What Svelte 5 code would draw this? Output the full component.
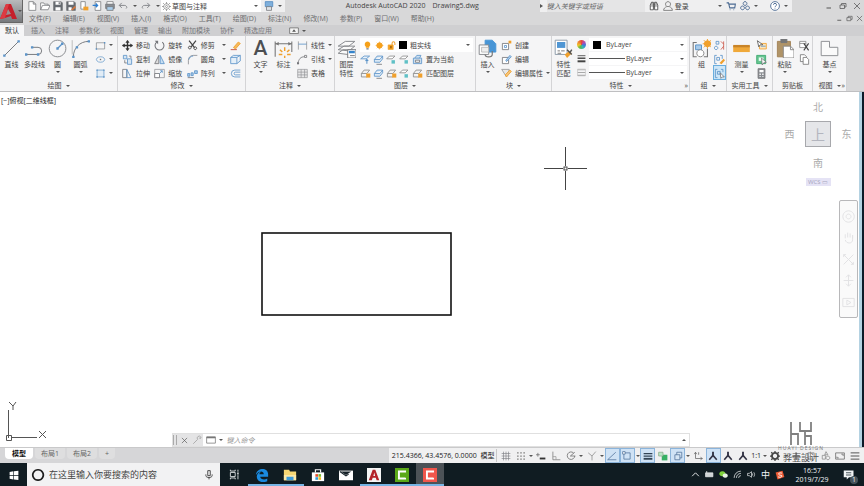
<!-- App.svelte
     CAD workspace: title bar, ribbon, model-space canvas, status bar and the
     desktop taskbar underneath. -->
<script lang="ts">
  type Shape = [d: string, stroke: string, fill?: string, width?: number]

  const G = '#74767a'
  const B = '#5b93c8'
  const Y = '#f0a02c'
  const W = '#f2f4f5'

  /** Icon shapes on a 16x16 grid. */
  const icons: Record<string, Shape[]> = {
    // title bar
    new: [['M3 1h7l4 4v10H3zM10 1v4h4', G, '#fff']],
    open: [['M1 14V3h5l1 2h6v2M1 14l3-7h12l-3 7z', G, '#fff']],
    save: [['M1 1h12l2 2v12H1z', G, '#666a70'], ['M4 1h8v5H4zM4 10h8v5H4z', 'none', '#fff'], ['M9 2h2v3H9z', 'none', G]],
    saveAs: [['M1 1h12l2 2v12H1z', G, '#666a70'], ['M4 1h8v5H4zM4 10h5v5H4z', 'none', '#fff'], ['M8 14l6-6 2 2-6 5z', 'none', '#d9783c']],
    web: [['M3 1h7v12H3z', G, '#fff'], ['M7 9h8v6H7z', 'none', Y]],
    mobile: [['M5 1h9v14H5z', G, '#fff'], ['M1 7h8M6 4l3 3-3 3', '#2f7fd0', 'none', 2]],
    print: [['M3 1h10v5H3z', G, '#fff'], ['M1 5h14v7H1z', G, '#8a8d92'], ['M3 9h10v6H3z', G, '#a9cdea']],
    undo: [['M6 3L2 7l4 4M2 7h8a4 3 0 0 1 3 5', '#85878b', 'none', 1.6]],
    redo: [['M10 3l4 4-4 4M14 7H6a4 3 0 0 0-3 5', '#85878b', 'none', 1.6]],
    gear: [['M8 3a5 5 0 1 0 .1 0zM8 0v3M8 13v3M0 8h3M13 8h3M2 2l2 2M12 12l2 2M14 2l-2 2M4 12l-2 2', '#777'], ['M8 6a2 2 0 1 0 .1 0z', '#777']],
    layers2: [['M2 1h12v8H2z', '#4a84bd', '#7fb0dc'], ['M4 9h8v6H4z', G, '#dfe3e8']],
    find: [['M2 14V7l2-5h3v12zM14 14V7l-2-5H9v12zM7 6h2M7 9h2', '#555', '#bbb', 1.5], ['M3 9h3v4H3zM10 9h3v4h-3z', 'none', '#fff']],
    user: [['M8 1a4 4 0 1 0 .1 0zM1 15c0-3 2-5 5-6M15 15c0-3-2-5-5-6M1 15h14', '#666']],
    cart: [['M1 3h3l2 8h8l1-6H5M6 14h1M12 14h1', '#4b6a92', 'none', 1.7]],
    cloud: [['M8 1a3 3 0 1 0 .1 0zM4 8a3 3 0 1 0 .1 0zM12 8a3 3 0 1 0 .1 0z', '#4b6a92', 'none', 1.5]],
    help: [['M8 1a7 7 0 1 0 .1 0z', '#4b6a92', '#fff', 1.4], ['M5.500 6c0-3 5-3 5 0 0 2-2.500 2-2.500 4M8 12v1', '#4b6a92', 'none', 1.5]],
    min: [['M3 12h9', '#555', 'none', 2]],
    restore: [['M2 6h9v7H2zM5 6V3h9v7h-3', '#555', 'none', 1.5]],
    close: [['M2 2l12 12M14 2L2 14', '#555', 'none', 1.5]],
    tray: [['M1 3h14v9H1z', '#666', '#f4f4f4'], ['M8 5l-3 4h6z', 'none', '#555']],
    // draw
    line: [['M2 14L14 2', G, 'none', .8], ['M1 13h2v2H1zM13 1h2v2h-2z', 'none', B]],
    polyline: [['M1 13h10a3 3 0 0 0 0-6H6', G, 'none', .8], ['M0 12h2v2H0zM10 12h2v2h-2zM5 6h2v2H5z', 'none', B]],
    circle: [['M8 1a7 7 0 1 0 .1 0z', '#85878b', 'none', .8], ['M8 8l4-4', B, 'none', 1], ['M7 7h2v2H7zM11 3h2v2h-2z', 'none', B]],
    arc: [['M2 15C2 8 7 2 15 2', G, 'none', .8], ['M1 14h2v2H1zM4 6h2v2H4zM14 1h2v2h-2z', 'none', B], ['M1 1v12', '#bbb', 'none', .8]],
    rect: [['M2 4h12v9H2z', G, 'none', .9], ['M1 12h2v2H1zM13 3h2v2h-2z', 'none', B]],
    ellipse: [['M8 4a6 4 0 1 0 .1 0z', B, 'none', 1], ['M7 7h2v2H7z', 'none', G]],
    hatch: [['M3 3h10v10H3z', B, '#e1ecf6', 1], ['M2 2h2v2H2zM12 2h2v2h-2zM2 12h2v2H2zM12 12h2v2h-2z', 'none', B]],
    // modify
    move: [['M8 1v14M1 8h14', '#333', 'none', 2], ['M8 0l3 4H5zM8 16l3-4H5zM0 8l4-3v6zM16 8l-4-3v6z', 'none', '#333']],
    copy: [['M2 2h5v5H2zM8 7h6v8H8z', B, '#d7e6f3'], ['M4 9v4h3M10 3h3v3', G]],
    stretch: [['M1 2h6v12H1z', G], ['M7 2l6 12H7z', B]],
    rotate: [['M4 3a6.500 6.500 0 1 0 8 0', G, 'none', 1.5], ['M1 1h5v5z', 'none', G]],
    mirror: [['M7 2v12H1z', G, '#ddd'], ['M9 2v12h6z', B, '#c9dff2']],
    scale: [['M1 2h14v12H1z', '#9a9ca0'], ['M1 8h7v6H1z', G, '#fff'], ['M8 8l4-4M9 4h3v3', B]],
    trim: [['M3 1l8 10M13 1L6 10', '#444', 'none', 1.8], ['M4 9a2 2 0 1 0 .1 0zM12 10a2 2 0 1 0 .1 0z', '#444', 'none', 1.4]],
    fillet: [['M2 15V9c0-4 3-7 7-7h6', '#8a8c90'], ['M3 8c0-3 3-5 6-5', B]],
    array: [['M1 8h3v4H1zM6 7h3v4H6zM11 4h4v4h-4z', B, '#a9cbea'], ['M1 14h9', G]],
    erase: [['M5 11l7-8 3 2-7 8z', Y, '#f5b95c'], ['M1 14h9', '#c9624e', 'none', 1.5]],
    box: [['M1 5h9v9H1zM1 5l4-3h10l-5 3M15 2v8l-5 4', B, '#e4eff8']],
    offset: [['M15 3H7a5 5 0 0 0 0 10h8M15 6H8a2 2 0 0 0 0 4h7', B]],
    // annotation
    dim: [['M1 2v13M15 2v9M1 4h14', '#777', 'none', .9], ['M1 4l3-1.500v3zM15 4l-3-1.500v3z', 'none', '#777'], ['M9 7v3M5 9l2 2M13 9l-2 2M4 13h3M14 13h-3M9 16v-2', Y, 'none', 1.2]],
    linear: [['M2 2v12M14 2v12', '#999'], ['M2 6h12', B]],
    leader: [['M1 14C3 7 5 4 11 4', G], ['M11 2h3v3h-3z', G, '#fff'], ['M0 12h3v3H0z', 'none', G]],
    table: [['M1 2h14v12H1zM1 6h14M1 10h14M6 2v12M11 2v12', '#8b8d91', '#e7e7e8', .9]],
    // layers
    layerProps: [['M1 6l6-4h8l-5 4zM1 9l5-3h9l-5 4zM1 12l4-3h8l-4 4z', '#85878b', '#fafafa', .8], ['M9 9h7v7H9z', G, '#fff', .8], ['M10 10h5v2h-5z', 'none', '#3584cb'], ['M11 14h4', G, 'none', .8]],
    bulb: [['M8 1a5 5 0 0 1 3 9v2H5v-2a5 5 0 0 1 3-9z', 'none', '#f6a11a'], ['M6 14h4', '#666', 'none', 2]],
    sun: [['M8 3a5 5 0 1 0 .1 0z', Y, '#f6a11a'], ['M8 1v14M1 8h14M3 3l10 10M13 3L3 13', '#f6a11a', 'none', 1]],
    unlock: [['M2 7h9v8H2z', Y, '#f6a11a'], ['M9 7V4a2 2 0 0 1 5 0v3', Y, 'none', 1.8], ['M6 9h2v4H6z', 'none', '#7a4d0d']],
    layA: [['M1 7l5-4h8l-5 4z', B, '#e7f1fa'], ['M10 8v6M8 10l2-2 2 2', B, 'none', 1.5]],
    layB: [['M2 8l4-5h8l-4 5zM2 8v4h8l4-5V3', B, '#dbe9f5'], ['M5 15h8', G]],
    layC: [['M1 7l4-4h8l-4 4z', '#888', '#fff'], ['M8 9h5v5H8z', 'none', '#5fc0c6']],
    layD: [['M2 8l4-5h8l-4 5zM2 8v5h8', '#888', '#f1f1f1'], ['M9 8h6v6H9z', 'none', Y]],
    layE: [['M2 6h12v8H2zM4 6l3-4h6l-2 4', B, '#cfe1f1'], ['M5 9h6v3H5z', G, '#fff']],
    // block
    insert: [['M6 1h6l3 3v7H6z', '#4795d6', '#4795d6', .8], ['M1 5h8v8H1z', '#85878b', '#fff', .8], ['M3 7h6v4H3z', '#aaa', '#eee', .6], ['M12 10v3M6 13a3 2 0 1 0 6 0', '#777', 'none', 1]],
    create: [['M2 5h9v9H2z', G, '#fff'], ['M5 8h3v3H5z', B], ['M11 1h4v4h-4z', 'none', Y]],
    edit: [['M2 5h9v9H2z', G, '#fff'], ['M7 9l6-7 2 2-7 7z', B, '#a9cbea']],
    attr: [['M1 2h11l-4 11z', '#999', '#e8e8e8'], ['M6 10l7-7 2 2-7 8z', Y, '#f5c479']],
    // properties
    match: [['M1 1h10v12H1z', '#8c9aa8', '#fff', .8], ['M2.500 2.500h7v5h-7z', 'none', '#4f96d4'], ['M3 10h2M6 10h3M3 12h3', '#777', 'none', .8], ['M9 13l4-3 2 2-4 4z', 'none', Y], ['M11 9l4 4M15 9l-2 3', '#555', 'none', 1.2]],
    lweight: [['M1 3h14', '#444', 'none', 1.5], ['M1 7.500h14', '#444', 'none', 2.500], ['M1 13h14', '#444', 'none', 3.500]],
    ltype: [['M1 3h14M1 8h14M1 13h14', '#aaa', '#ddd', 2], ['M1 2h14v12H1z', '#c4c4c4']],
    // groups, utilities, clipboard, view
    group: [['M4 3H1v12h3M10 15h3V8', '#777', 'none', .9], ['M3 5h5v4H3z', B, '#a9cbea', .8], ['M7 9a3 3 0 1 0 .1 0z', '#888', '#fff', .8], ['M13 1a3 3 0 1 0 .1 0z', 'none', Y], ['M13 0v8M9 4h7M10 1l6 6M16 1l-6 6', Y, 'none', .8]],
    ungroup: [['M3 2h4v4H3zM3 9a2.500 2.500 0 1 0 .1 0z', B], ['M10 2l4 4M14 9l-4 5M14 2v12', '#cc5a4a']],
    groupEdit: [['M4 2H1v12h3M9 2h3v5M4 5h4v4H4z', B], ['M8 13l6-6 2 2-5 6z', 'none', Y]],
    groupSel: [['M5 2H2v12h3M10 2h3v4M5 5h4v4H5z', B], ['M9 7l6 6h-3l-2 2z', G, '#fff']],
    measure: [['M1 6h14v5H1z', 'none', '#f0a93a'], ['M1 5h14v2H1z', 'none', '#c98428']],
    quick: [['M5 5h10v8H5z', Y, '#fbe5bd'], ['M2 1l2 9 2-3 4 0z', '#555', '#fff'], ['M7 9h7', B]],
    calc1: [['M1 2h13v12H1z', '#37a56a', '#66c490'], ['M4 5h7v5H4z', 'none', '#e9fff2'], ['M8 6l7 6-4 1-2 3z', G, '#fff']],
    calc: [['M3 1h10v14H3z', G, '#8a8d92'], ['M5 3h6v3H5zM5 8h2v2H5zM9 8h2v2H9zM5 12h2v1H5zM9 12h2v1H9z', 'none', '#fff']],
    paste: [['M2 2h11v13H2z', '#a38456', '#b09468', .8], ['M5 0h5v3H5z', G, '#777', .8], ['M7 6h6l3 3v7H7z', '#888', '#fff', .8], ['M13 6v3h3', '#888', 'none', .8]],
    cut: [['M1 2h9v9H1zM1 5h9', '#888', '#fff'], ['M7 5l7 10M14 5L7 15', '#444', 'none', 1.6]],
    copyClip: [['M2 1h6l3 3v7H2z', '#777', '#fff'], ['M6 5h5l3 3v7H6z', '#777', '#fff']],
    base: [['M1 2h7v5h7v7H1z', '#8b8d91', '#fafafa', .8]],
    // status bar
    grid: [['M4 1v14M8 1v14M12 1v14M1 4h14M1 8h14M1 12h14', '#7d7f83', 'none', 1]],
    dots: [['M2 3h2M7 3h2M12 3h2M2 8h2M7 8h2M12 8h2M2 13h2M7 13h2M12 13h2', '#666', 'none', 2]],
    infer: [['M3 3v6M0 6h6', '#666'], ['M6 12h9', '#333', 'none', 3]],
    ortho: [['M3 1v13h12', '#777'], ['M3 9h5v5', '#999']],
    polar: [['M12 3a6 6 0 1 0 2 5M7 8l7-6M7 8h8', '#666']],
    iso: [['M2 3l6 5v7M14 1L8 8', '#888', 'none', 1.2]],
    track: [['M1 14L14 2M1 14h14', '#4d6f98']],
    snap: [['M3 3h10v10H3z', '#4d6f98'], ['M1 1h4v4H1z', '#4d6f98', '#fff']],
    lwt: [['M1 4h14M1 8h14', '#345', 'none', 2], ['M1 12.500h14', '#345', 'none', 3]],
    transp: [['M6 6h9v9H6z', 'none', '#37b063'], ['M1 2h7v6H1z', '#8a8', '#b9e5c6']],
    cycle: [['M3 6h8v8H3zM6 6V2h8v9h-3', '#4d6f98', '#d5e5f4']],
    ucs: [['M4 2v10h11M4 2L2 5M4 2l2 3M15 12l-3-2M15 12l-3 2M9 2v4', '#666']],
    person: [['M8 1v8', '#334', 'none', 3], ['M8 7L2 14M8 7l6 7', '#334', 'none', 2.5]],
    gearDark: [['M8 3a5 5 0 1 0 .1 0z', '#444', 'none', 3], ['M8 0v3M8 13v3M0 8h3M13 8h3M2 2l2 2M12 12l2 2M14 2l-2 2M4 12l-2 2', '#444', 'none', 2]],
    plus: [['M8 2v12M2 8h12', '#555', 'none', 1.500]],
    isolate: [['M3 3h10v10H3zM7 1v14', '#777']],
    shapes: [['M2 7h5v6H2zM11 8a3 3 0 1 0 .1 0zM8 1l3 5H6z', '#888']],
    full: [['M1 3h14v10H1zM10 5h3v3M3 9v2h3', '#666']],
    menu: [['M1 3h14M1 8h14M1 13h14', '#555', 'none', 1.600]],
    wrench: [['M2 14l7-7M9 7a3 3 0 0 1 5-4l-2 2 1 1 2-2', '#aaa', 'none', 1.500]],
    prompt: [['M1 3h14v10H1z', '#777', '#fff'], ['M1 4h14', '#777', 'none', 2.500]],
    // navigation bar
    wheel: [['M8 1a7 7 0 1 0 .1 0zM8 5a3 3 0 1 0 .1 0z', '#e2e2e4']],
    pan: [['M4 9V4M7 8V2M10 8V3M13 9V5v6c0 5-8 5-9 0', '#e2e2e4']],
    zoom: [['M2 2l12 12M14 2L2 14M2 5V2h3M11 14h3v-3', '#e2e2e4']],
    orbit: [['M8 1v14M2 8h12M5 4l3-3 3 3M5 12l3 3 3-3', '#e2e2e4']],
    motion: [['M1 3h14v10H1zM6 5v6l5-3z', '#e2e2e4']],
    // taskbar
    windows: [['M1 3l6-1v6H1zM8 2l7-1v7H8zM1 9h6v6l-6-1zM8 9h7v7l-7-1z', 'none', '#fff']],
    cortana: [['M8 2a6 6 0 1 0 .1 0z', '#1c1c1c', 'none', 2]],
    mic: [['M6 1h4v8H6zM3 7v2c0 4 10 4 10 0V7M8 12v3', '#444', 'none', 1.500]],
    taskview: [['M2 5h7v6H2zM2 1v2h7V1M2 15v-2h7v2M13 1v3M13 9v6', W, 'none', 1.200], ['M12 5h2v3h-2z', 'none', W]],
    edge: [['M1 8C2-1 15-1 15 7v3H6c0 3 5 4 8 2v3C8 18 2 15 2 10c0-3 2-5 5-6-1 1-2 2-2 3h5c0-4-6-4-9 1z', 'none', '#1a8ae0']],
    folder: [['M1 2h6l1 2h7v10H1z', 'none', '#f7d774'], ['M1 8h14v6H1z', 'none', '#fbe9a9'], ['M4 10h8v4H4z', 'none', '#3e9bd8']],
    store: [['M1 5h14v10H1z', 'none', '#fff'], ['M5 5V2h6v3', '#fff', 'none', 1.300], ['M5 7h3v3H5z', 'none', '#e65030'], ['M8.500 7h3v3h-3z', 'none', '#75b82c'], ['M5 10.500h3v3H5z', 'none', '#2d9de0'], ['M8.500 10.500h3v3h-3z', 'none', '#f5b921']],
    mail: [['M0 3h16v11H0z', 'none', '#fff'], ['M2 4l12 0-6 4z', 'none', '#142027'], ['M1 4l7 5 3-2', '#142027', 'none', 1.2]],
    acad: [['M0 0h16v16H0z', 'none', '#f4f4f4'], ['M2 14L6.500 2h3L14 14h-3l-1-3H6.500l-1 3zM8.300 5l-1 4h2z', 'none', '#b32229']],
    camGreen: [['M0 0h16v16H0z', 'none', '#5aa818'], ['M11.500 5V4h-7v8h7v-1', '#fff', 'none', 2.200]],
    camRed: [['M0 0h16v16H0z', 'none', '#f0564c'], ['M11.500 5V4h-7v8h7v-1', '#fff', 'none', 2.200]],
    up: [['M2 11l6-6 6 6', W, 'none', 1.600]],
    battery: [['M1 5h13v7H1z', W, '#cfd3d5'], ['M3 2v3', W, 'none', 1.500]],
    wechat: [['M6 2a5.500 4.500 0 1 0 .1 0z', 'none', '#7fd03c'], ['M11 6a4.500 4 0 1 0 .1 0z', 'none', '#e9f3e4']],
    wifi: [['M2 14A12 12 0 0 1 14 2M6 14a8 8 0 0 1 8-8M10 14a4 4 0 0 1 4-4', W, 'none', 1.300]],
    volume: [['M1 6h3l4-3v10l-4-3H1zM10 6v4M12 4c2 2 2 6 0 8', W, 'none', 1.200]],
    sogou: [['M1 4l11-3 3 10-11 4z', 'none', '#ee5b35'], ['M11 5c-3-1-6 0-5 2s6 1 5 3-4 2-6 1', '#fff', 'none', 1.500]],
    notify: [['M1 2h13v9H8l-3 3v-3H1z', 'none', W], ['M4 5h7M4 8h7', '#35434b']],
  }

  const quick = ['new', 'open', 'save', 'saveAs', 'web', 'mobile', 'print']
  const menus = ['文件(F)', '编辑(E)', '视图(V)', '插入(I)', '格式(O)', '工具(T)', '绘图(D)', '标注(N)', '修改(M)', '参数(P)', '窗口(W)', '帮助(H)']
  const ribbonTabs = ['默认', '插入', '注释', '参数化', '视图', '管理', '输出', '附加模块', '协作', '精选应用']
  const layouts = ['模型', '布局1', '布局2']

  /** Status toggles; "v" is a drop-down arrow, a trailing "*" marks a toggle that is on. */
  const statusItems = ['grid', 'dots', 'v', 'infer', 'ortho', 'polar', 'v', 'iso', 'v', 'track*', 'snap*', 'v', 'lwt*', 'transp', 'cycle*', 'v', 'ucs', 'person*', 'person', 'person']
  const statusTail = ['gearDark', 'v', 'plus', 'isolate', 'shapes', 'full', 'menu']

  const apps = [
    { icon: 'taskview', name: '任务视图', open: false },
    { icon: 'edge', name: 'Edge', open: true },
    { icon: 'folder', name: '文件资源管理器', open: true },
    { icon: 'store', name: '应用商店', open: false },
    { icon: 'mail', name: '邮件', open: false },
    { icon: 'acad', name: 'AutoCAD', open: true },
    { icon: 'camGreen', name: 'Camtasia', open: true },
    { icon: 'camRed', name: '录制', open: true },
  ]

  let activeTab = $state('默认')
  let activeLayout = $state('模型')
  let keyword = $state('')
  let command = $state('')
  let search = $state('')
</script>

{#snippet icon(name: string, size = 11)}
  <svg class="icon" width={size} height={size} viewBox="0 0 16 16" aria-hidden="true">
    {#each icons[name] as [d, stroke, fill, width]}
      <path {d} {stroke} fill={fill ?? 'none'} stroke-width={width ?? 1.2} />
    {/each}
  </svg>
{/snippet}

{#snippet big(name: string, label: string, caret = false)}
  <button class="big">
    {#if name === 'text'}
      <span class="glyph" aria-hidden="true">A</span>
    {:else}
      {@render icon(name, 19)}
    {/if}
    <span class="big-label">{label}</span>
    {#if caret}<span class="caret"></span>{/if}
  </button>
{/snippet}

{#snippet small(name: string, label = '', caret = false)}
  <button class="small" aria-label={label || name}>
    {@render icon(name)}
    {#if label}<span>{label}</span>{/if}
    {#if caret}<span class="caret push"></span>{/if}
  </button>
{/snippet}

{#snippet title(text: string, caret = true, launcher = false)}
  <div class="panel-title">
    <span>{text}</span>
    {#if caret}<span class="caret"></span>{/if}
    {#if launcher}<span class="launcher">»</span>{/if}
  </div>
{/snippet}

<div class="app">
  <header class="top">
    <button class="app-menu" aria-label="应用程序菜单">
      <svg width="18" height="19" viewBox="0 0 18 19" aria-hidden="true">
        <path d="M0 17L6 2h5l6 15h-5l-1-3-6 2z" fill="#c5202b" />
        <path d="M6 2h3L5 16l-5 1z" fill="#dd3a42" />
        <path d="M8 7l3 5-5 1z" fill="#9c8f91" />
      </svg>
      <span class="caret"></span>
    </button>
    <div class="top-rows">
      <div class="titlebar">
        <div class="quick">
          {#each quick as name}
            <button aria-label={name}>{@render icon(name, 10)}</button>
          {/each}
          <button aria-label="undo">{@render icon('undo', 10)}</button>
          <span class="caret"></span>
          <button aria-label="redo">{@render icon('redo', 10)}</button>
          <span class="caret"></span>
        </div>
        <label class="combo workspace">
          {@render icon('gear', 9)}
          <select aria-label="工作空间"><option>草图与注释</option></select>
          <span class="caret"></span>
        </label>
        <div class="quick-end">
          {@render icon('layers2', 10)}
          <span class="caret"></span>
        </div>
        <h1 class="doc-title"><span>Autodesk AutoCAD 2020</span><span>Drawing5.dwg</span></h1>
        <div class="info">
          <span class="caret right"></span>
          <input bind:value={keyword} placeholder="键入关键字或短语" aria-label="搜索帮助" />
          <button aria-label="搜索">{@render icon('find', 10)}</button>
          <button class="login">{@render icon('user', 10)}<span>登录</span></button>
          <span class="caret push"></span>
          <button aria-label="商店">{@render icon('cart', 10)}</button>
          <button aria-label="应用">{@render icon('cloud', 10)}</button>
          <span class="caret"></span>
          <button class="help" aria-label="帮助">{@render icon('help', 10)}</button>
          <span class="caret"></span>
        </div>
        <div class="win">
          <button aria-label="最小化">{@render icon('min', 8)}</button>
          <button aria-label="还原">{@render icon('restore', 8)}</button>
          <button aria-label="关闭">{@render icon('close', 8)}</button>
        </div>
      </div>
      <nav class="menubar">
        {#each menus as m}
          <button>{m}</button>
        {/each}
        <div class="win doc-win">
          <button aria-label="最小化文档">{@render icon('min', 7)}</button>
          <button aria-label="还原文档">{@render icon('restore', 7)}</button>
          <button aria-label="关闭文档">{@render icon('close', 7)}</button>
        </div>
      </nav>
    </div>
  </header>

  <div class="tabs" role="tablist">
    {#each ribbonTabs as t}
      <button role="tab" aria-selected={activeTab === t} class:active={activeTab === t} onclick={() => (activeTab = t)}>{t}</button>
    {/each}
    <span class="tray">{@render icon('tray', 10)}<span class="caret"></span></span>
  </div>

  <div class="ribbon">
    <section class="panel">
      <div class="body">
        {@render big('line', '直线')}
        {@render big('polyline', '多段线')}
        {@render big('circle', '圆', true)}
        {@render big('arc', '圆弧', true)}
        <div class="col">
          {@render small('rect', '', true)}
          {@render small('ellipse', '', true)}
          {@render small('hatch', '', true)}
        </div>
      </div>
      {@render title('绘图')}
    </section>

    <section class="panel">
      <div class="body spread">
        <div class="col">
          {@render small('move', '移动')}
          {@render small('copy', '复制')}
          {@render small('stretch', '拉伸')}
        </div>
        <div class="col">
          {@render small('rotate', '旋转')}
          {@render small('mirror', '镜像')}
          {@render small('scale', '缩放')}
        </div>
        <div class="col">
          {@render small('trim', '修剪', true)}
          {@render small('fillet', '圆角', true)}
          {@render small('array', '阵列', true)}
        </div>
        <div class="col">
          {@render small('erase')}
          {@render small('box')}
          {@render small('offset')}
        </div>
      </div>
      {@render title('修改')}
    </section>

    <section class="panel">
      <div class="body inset">
        {@render big('text', '文字', true)}
        {@render big('dim', '标注')}
        <div class="col wide">
          {@render small('linear', '线性', true)}
          {@render small('leader', '引线', true)}
          {@render small('table', '表格')}
        </div>
      </div>
      {@render title('注释')}
    </section>

    <section class="panel">
      <div class="body">
        {@render big('layerProps', '图层特性')}
        <div class="col fill">
          <label class="combo">
            {@render icon('bulb', 9)}
            {@render icon('sun', 9)}
            {@render icon('unlock', 9)}
            <span class="swatch tight"></span>
            <select aria-label="图层"><option>粗实线</option></select>
            <span class="caret"></span>
          </label>
          <div class="strip">
            {#each ['layA', 'layB', 'layC', 'layC'] as name}
              {@render icon(name)}
            {/each}
            {@render small('layE', '置为当前')}
          </div>
          <div class="strip">
            {#each ['layD', 'layB', 'layD', 'layC'] as name}
              {@render icon(name)}
            {/each}
            {@render small('layD', '匹配图层')}
          </div>
        </div>
      </div>
      {@render title('图层')}
    </section>

    <section class="panel">
      <div class="body">
        {@render big('insert', '插入', true)}
        <div class="col wide">
          {@render small('create', '创建')}
          {@render small('edit', '编辑')}
          {@render small('attr', '编辑属性', true)}
        </div>
      </div>
      {@render title('块')}
    </section>

    <section class="panel">
      <div class="body">
        {@render big('match', '特性匹配')}
        <div class="col fill">
          <div class="prop">
            <span class="wheel"></span>
            <label class="combo">
              <span class="swatch"></span>
              <select aria-label="颜色"><option>ByLayer</option></select>
              <span class="caret"></span>
            </label>
          </div>
          <div class="prop">
            {@render icon('lweight', 9)}
            <label class="combo">
              <span class="rule"></span>
              <select aria-label="线宽"><option>ByLayer</option></select>
              <span class="caret"></span>
            </label>
          </div>
          <div class="prop">
            {@render icon('ltype', 9)}
            <label class="combo">
              <span class="rule"></span>
              <select aria-label="线型"><option>ByLayer</option></select>
              <span class="caret"></span>
            </label>
          </div>
        </div>
      </div>
      {@render title('特性', true, true)}
    </section>

    <section class="panel">
      <div class="body">
        {@render big('group', '组')}
        <div class="col snug">
          {@render small('ungroup')}
          {@render small('groupEdit')}
          <div class="pressed">{@render small('groupSel')}</div>
        </div>
      </div>
      {@render title('组')}
    </section>

    <section class="panel">
      <div class="body inset">
        {@render big('measure', '测量', true)}
        <div class="col">
          {@render small('quick')}
          {@render small('calc1')}
          {@render small('calc')}
        </div>
      </div>
      {@render title('实用工具')}
    </section>

    <section class="panel">
      <div class="body">
        {@render big('paste', '粘贴', true)}
        <div class="col">
          {@render small('cut')}
          {@render small('copyClip')}
        </div>
      </div>
      {@render title('剪贴板', false)}
    </section>

    <section class="panel">
      <div class="body centered">
        {@render big('base', '基点', true)}
      </div>
      {@render title('视图', true, true)}
    </section>
  </div>

  <main class="canvas">
    <div class="view-label">[−]俯视[二维线框]</div>

    <!-- model space geometry and cursor -->
    <svg class="drawing" width="600" height="240" aria-hidden="true">
      <rect x="262" y="141" width="189" height="82" fill="none" stroke="#111" stroke-width="1.6" />
      <path d="M544 76.500h19M568 76.500h19M565.500 55v19M565.500 79v19" stroke="#444" />
      <rect x="564" y="75" width="3" height="3" fill="none" stroke="#444" />
    </svg>

    <svg class="ucs" width="50" height="44" aria-hidden="true">
      <path d="M8.500 38V10M11 37.500h26M6.500 35.500h5v5h-5z" fill="none" stroke="#555" />
      <path d="M9 2l4 4 3-4M13 6v4M39 31l7 7M46 31l-7 7" fill="none" stroke="#555" />
    </svg>

    <div class="viewcube">
      <span class="north">北</span>
      <span class="west">西</span>
      <button class="face">上</button>
      <span class="east">东</span>
      <span class="south">南</span>
      <button class="wcs">WCS ▭</button>
    </div>

    <div class="navbar">
      {#each ['wheel', 'pan', 'zoom', 'orbit', 'motion'] as name}
        <button aria-label={name}>{@render icon(name, 13)}</button>
      {/each}
    </div>

    <div class="command">
      <div class="command-grip">
        <span class="grip"></span>
        {@render icon('close', 7)}
        {@render icon('wrench', 10)}
      </div>
      {@render icon('prompt', 10)}
      <span class="caret"></span>
      <input bind:value={command} placeholder="键入命令" aria-label="命令行" />
      <span class="caret up"></span>
    </div>
  </main>

  <div class="status">
    <div class="layouts">
      {#each layouts as l}
        <button class:active={activeLayout === l} onclick={() => (activeLayout = l)}>{l}</button>
      {/each}
      <button aria-label="新建布局">+</button>
    </div>
    <div class="status-tools">
      <span class="coords">215.4366, 43.4576, 0.0000</span>
      <button class="model">模型</button>
      {#each statusItems as s}
        {#if s === 'v'}
          <span class="caret"></span>
        {:else}
          <button class="toggle" class:on={s.endsWith('*')} aria-label={s.replace('*', '')}>{@render icon(s.replace('*', ''), 10)}</button>
        {/if}
      {/each}
      <button class="scale">1:1</button>
      <span class="caret"></span>
      {#each statusTail as s}
        {#if s === 'v'}
          <span class="caret"></span>
        {:else}
          <button class="toggle" aria-label={s}>{@render icon(s, 10)}</button>
        {/if}
      {/each}
    </div>
  </div>

  <footer class="taskbar">
    <button class="start" aria-label="开始">{@render icon('windows', 10)}</button>
    <label class="search">
      {@render icon('cortana', 14)}
      <input bind:value={search} placeholder="在这里输入你要搜索的内容" aria-label="搜索" />
      {@render icon('mic', 10)}
    </label>
    <div class="apps">
      {#each apps as a}
        <button class:open={a.open} class:current={a.icon === 'camRed'} aria-label={a.name}>{@render icon(a.icon, a.icon === 'taskview' ? 11 : 14)}</button>
      {/each}
    </div>
    <div class="sys">
      {#each ['up', 'battery', 'wechat', 'wifi', 'volume'] as s}
        {@render icon(s, 9)}
      {/each}
      <span class="ime">中</span>
      {@render icon('sogou', 10)}
      <div class="clock"><span>16:57</span><span>2019/7/29</span></div>
      <div class="notify">{@render icon('notify', 12)}<span class="count">1</span></div>
    </div>
  </footer>

  <div class="brand">
    <svg width="24" height="23" viewBox="0 0 24 23" aria-hidden="true">
      <path d="M2 0v23M2 12h7v11M11 0v9h11V0M16 9v14M16 14h6v9" fill="none" stroke="#808080" stroke-width="1.8" />
    </svg>
    <span class="brand-en">HUAYI DESIGN</span>
    <span class="brand-cn">骅壹設计</span>
  </div>
</div>

<style>
  :global(body) {
    margin: 0;
  }

  .app {
    position: relative;
    min-height: 100vh;
    display: flex;
    flex-direction: column;
    font-family: 'Open Sans', 'Noto Sans CJK SC', sans-serif;
    font-size: 7px;
    line-height: 9px;
    color: #444;
    background: #d8d8d9;
    overflow: hidden;
  }

  button,
  input,
  select {
    font: inherit;
    color: inherit;
    background: none;
    border: 0;
    padding: 0;
    margin: 0;
    min-width: 0;
    white-space: nowrap;
  }

  button {
    display: flex;
    align-items: center;
    justify-content: center;
  }

  select {
    appearance: none;
    flex: 1;
  }

  input::placeholder {
    color: inherit;
    opacity: 1;
  }

  .icon {
    display: block;
    flex-shrink: 0;
  }

  .caret {
    flex-shrink: 0;
    width: 0;
    height: 0;
    border: 2px solid transparent;
    border-top-color: #555;
    border-bottom-width: 0;
  }

  .caret.right {
    border: 2px solid transparent;
    border-left: 3px solid #555;
    border-right-width: 0;
  }

  .caret.up {
    border: 2px solid transparent;
    border-bottom-color: #555;
    border-top-width: 0;
  }

  .caret.push {
    margin-left: auto;
  }

  /* ===== Title and menu bar ===== */
  .top {
    display: flex;
    height: 25px;
  }

  .app-menu {
    width: 23px;
    height: 23px;
    background: linear-gradient(#b9babc, #77797c);
    border-right: 1px solid #666;
    border-bottom: 1px solid #666;
  }

  .top-rows {
    flex: 1;
    min-width: 0;
  }

  .titlebar {
    display: flex;
    height: 12px;
    align-items: stretch;
  }

  .quick,
  .quick-end,
  .info {
    display: flex;
    align-items: center;
    background: #efeff0;
  }

  .quick {
    width: 138px;
    padding-left: 4px;
    gap: 4px;
    box-sizing: border-box;
    background: #e6e6e7;
  }

  .quick .caret {
    margin: 0 1px;
  }

  .combo {
    display: flex;
    align-items: center;
    gap: 3px;
    padding: 0 3px;
    background: #fff;
    min-width: 0;
    box-sizing: border-box;
  }

  .workspace {
    width: 100px;
    gap: 1px;
    padding-left: 1px;
  }

  .quick-end {
    width: 24px;
    justify-content: space-evenly;
  }

  .doc-title {
    flex: 1;
    display: flex;
    justify-content: center;
    gap: 7px;
    margin: 0;
    font-size: 7px;
    font-weight: 400;
    line-height: 12px;
    white-space: nowrap;
  }

  .info {
    width: 30%;
    gap: 4px;
    padding-right: 4px;
    box-sizing: border-box;
  }

  .info input {
    width: 98px;
    font-style: italic;
    color: #666;
    background: #e5e5e6;
    height: 100%;
  }

  .login {
    gap: 2px;
  }

  .help {
    margin-left: 8px;
  }

  .win {
    display: flex;
    width: 72px;
    align-items: center;
    justify-content: flex-end;
    gap: 6px;
    padding-right: 3px;
    box-sizing: border-box;
  }

  .menubar {
    display: flex;
    align-items: center;
    height: 13px;
    gap: 12px;
    padding-left: 6px;
    color: #6c6c6e;
  }

  .doc-win {
    margin-left: auto;
    gap: 3px;
    padding-right: 1px;
  }

  /* ===== Ribbon tabs ===== */
  .tabs {
    display: flex;
    height: 11px;
    background: #cfcfd1;
    color: #77777a;
  }

  .tabs button {
    padding: 0 5px;
  }

  .tabs button.active {
    margin-right: 2px;
    background: #f6f6f7;
    color: #333;
  }

  .tray {
    display: flex;
    align-items: center;
    gap: 3px;
    margin-left: 12px;
  }

  /* ===== Ribbon ===== */
  .ribbon {
    display: grid;
    grid-template-columns: 118fr 128fr 89fr 141fr 76fr 138fr 37fr 46fr 40fr 34fr 17fr;
    height: 55px;
    border-bottom: 1px solid #bfbfc1;
    flex-shrink: 0;
  }

  .panel {
    display: flex;
    flex-direction: column;
    min-width: 0;
    background: #f5f5f6;
    border-right: 1px solid #d4d4d6;
  }

  .body {
    display: flex;
    height: 42px;
    padding-top: 2px;
  }

  .body.spread {
    justify-content: space-between;
    padding-left: 1px;
    padding-right: 4px;
  }

  .body.inset {
    padding-left: 3px;
  }

  .body.centered {
    justify-content: center;
  }

  .big {
    width: 23px;
    flex-shrink: 0;
    flex-direction: column;
    justify-content: flex-start;
    padding-top: 1px;
    gap: 2px;
  }

  .big-label {
    width: 22px;
    padding: 0 3px;
    box-sizing: border-box;
    display: flex;
    justify-content: center;
    white-space: normal;
    word-break: break-all;
  }

  .body > .big:nth-child(2) .big-label {
    padding: 0;
  }

  .glyph {
    height: 19px;
    font: 500 21px/19px Roboto, sans-serif;
    color: #4c4e52;
  }

  .col {
    display: flex;
    flex-direction: column;
    padding-left: 3px;
  }

  .col.wide {
    flex: 1;
    padding-left: 2px;
    padding-right: 4px;
  }

  .col.fill {
    flex: 1;
    min-width: 0;
    padding-left: 2px;
    padding-right: 2px;
    gap: 1px;
  }

  .col.snug {
    padding-left: 1px;
  }

  .small {
    height: 14px;
    gap: 3px;
    justify-content: flex-start;
  }

  .spread .small .caret {
    margin-left: 4px;
  }

  .pressed {
    background: #cde6f7;
    box-shadow: 0 0 0 1px #6aaede;
    height: 13px;
  }

  .col.fill .combo {
    height: 13px;
    flex: 1;
    width: 100%;
  }

  .strip {
    display: flex;
    align-items: center;
    height: 13px;
    gap: 2px;
  }

  .prop {
    display: flex;
    align-items: center;
    gap: 3px;
    height: 13px;
  }

  .prop .combo {
    gap: 1px;
    padding-left: 0;
  }

  .wheel {
    width: 9px;
    height: 9px;
    flex-shrink: 0;
    border-radius: 50%;
    background: conic-gradient(#e7473c, #b04bb4, #3f78d8, #35b8b0, #57b947, #f0c62c, #ef8730, #e7473c);
  }

  .swatch {
    width: 8px;
    height: 8px;
    margin: 0 4px;
    background: #000;
    flex-shrink: 0;
  }

  .swatch.tight {
    margin: 0;
  }

  .rule {
    width: 36px;
    height: 1px;
    background: #555;
    flex-shrink: 0;
  }

  .panel-title {
    position: relative;
    display: flex;
    align-items: center;
    justify-content: center;
    gap: 4px;
    flex: 1;
    white-space: nowrap;
  }

  .launcher {
    position: absolute;
    right: 1px;
  }

  /* ===== Canvas ===== */
  .canvas {
    position: relative;
    flex: 1;
    min-height: 240px;
    background: #fff;
    border-right: 2px solid #0c1a28;
    box-shadow: inset -3px 0 #b4d2e2;
  }

  .view-label {
    position: absolute;
    top: 4px;
    left: 1px;
    color: #222;
  }

  .drawing {
    position: absolute;
    top: 0;
    left: 0;
  }

  .ucs {
    position: absolute;
    left: 0;
    bottom: 3px;
  }

  .viewcube {
    position: absolute;
    top: 9px;
    right: 8px;
    width: 72px;
    display: grid;
    grid-template: 12px 42px 16px 22px / 1fr 42px 1fr;
    place-items: center;
    font-size: 10px;
    color: #aaa;
  }

  .north,
  .south,
  .wcs {
    grid-column: 2;
  }

  .west {
    grid-column: 1;
  }

  .face {
    width: 26px;
    height: 26px;
    font-size: 14px;
    color: #b3b5be;
    background: #e5e6e9;
    border: 1px solid #a7a8ac;
    box-sizing: border-box;
  }

  .wcs {
    width: 25px;
    height: 8px;
    font-size: 6px;
    color: #a5a5bd;
    background: #e5e3f5;
  }

  .navbar {
    position: absolute;
    top: 108px;
    right: 4px;
    width: 19px;
    height: 118px;
    box-sizing: border-box;
    display: flex;
    flex-direction: column;
    align-items: center;
    justify-content: space-evenly;
    background: #fafafa;
    border: 1px solid #b8b8ba;
    border-radius: 2px;
  }

  .command {
    position: absolute;
    left: 20%;
    right: 20%;
    bottom: 0;
    height: 14px;
    display: flex;
    align-items: center;
    gap: 3px;
    padding-right: 3px;
    border: 1px solid #e0e0e0;
    box-sizing: border-box;
    background: #fff;
    color: #999;
  }

  .command-grip {
    display: flex;
    align-items: center;
    gap: 4px;
    width: 30px;
    height: 100%;
    background: #e4e4e5;
  }

  .grip {
    width: 2px;
    height: 10px;
    border-left: 1px solid #aaa;
    border-right: 1px solid #aaa;
  }

  .command input {
    flex: 1;
    font-style: italic;
  }

  /* ===== Status bar ===== */
  .status {
    display: flex;
    height: 16px;
    flex-shrink: 0;
    border-top: 1px solid #c9c9ca;
    box-sizing: border-box;
    background: #d6d6d8;
  }

  .layouts {
    flex: 1;
    display: flex;
    align-items: flex-start;
    padding-left: 5px;
    gap: 2px;
    color: #666;
  }

  .layouts button {
    height: 11px;
    padding: 0 6px;
    background: #dededf;
    border-radius: 0 0 4px 4px;
  }

  .layouts button.active {
    padding: 0 7px;
    background: #fff;
    color: #111;
    font-weight: 600;
  }

  .status-tools {
    display: flex;
    align-items: center;
    justify-content: space-between;
    width: 55%;
    padding: 0 2px 0 3px;
    box-sizing: border-box;
    background: #f0f0f1;
    color: #222;
  }

  .model {
    height: 13px;
    padding: 0 2px;
    border-right: 1px solid #c8c8c8;
  }

  .toggle {
    width: 13px;
    height: 13px;
  }

  .toggle.on {
    background: #cfe2f5;
    box-shadow: 0 0 0 1px #8bb4db;
  }

  /* ===== Taskbar ===== */
  .taskbar {
    display: flex;
    height: 23px;
    flex-shrink: 0;
    background: #101c22;
    color: #f2f4f5;
  }

  .start {
    width: 27px;
  }

  .search {
    display: flex;
    align-items: center;
    gap: 4px;
    width: 193px;
    padding: 0 6px 0 4px;
    box-sizing: border-box;
    background: #f2f2f3;
    color: #444;
    font-size: 9px;
  }

  .search input {
    flex: 1;
  }

  .apps {
    display: flex;
  }

  .apps button {
    width: 28px;
    box-sizing: border-box;
    border: 2px solid transparent;
    border-width: 2px 0;
  }

  .apps button.open {
    border-bottom-color: #76b4e4;
  }

  .apps button.current {
    background: #4c5257;
  }

  .sys {
    display: flex;
    align-items: center;
    gap: 5px;
    margin-left: auto;
    padding-right: 9px;
  }

  .ime {
    font-size: 9px;
  }

  .clock {
    display: flex;
    flex-direction: column;
    align-items: center;
    width: 44px;
  }

  .notify {
    position: relative;
    margin-left: 4px;
  }

  .count {
    position: absolute;
    right: -3px;
    bottom: -3px;
    width: 8px;
    height: 8px;
    line-height: 8px;
    text-align: center;
    border-radius: 50%;
    background: #46535b;
  }

  /* ===== Brand mark ===== */
  .brand {
    position: absolute;
    right: 40px;
    bottom: 22px;
    display: flex;
    flex-direction: column;
    align-items: center;
    color: #777;
    pointer-events: none;
  }

  .brand-en {
    font-size: 5px;
    line-height: 7px;
    letter-spacing: 1px;
  }

  .brand-cn {
    font-size: 9px;
    line-height: 12px;
    color: #555;
  }
</style>
